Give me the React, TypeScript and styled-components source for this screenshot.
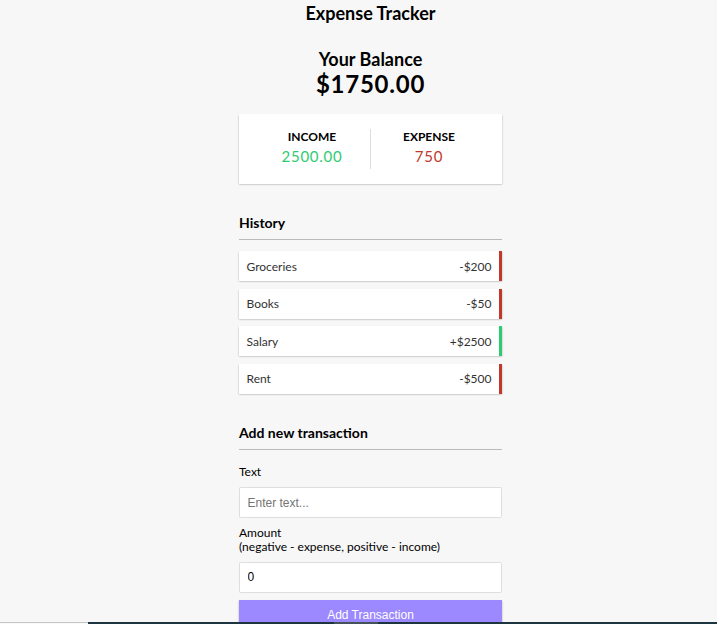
import React from "react";
import styled, { createGlobalStyle } from "styled-components";

const GlobalStyle = createGlobalStyle`
  * { box-sizing: border-box; }
  html, body { margin: 0; padding: 0; }
  body {
    background-color: #f7f7f7;
    font-family: Lato, "Noto Sans", sans-serif;
    color: #000;
  }
`;

const Page = styled.div`
  display: flex;
  flex-direction: column;
  align-items: center;
  padding-left: 24px;
  padding-top: 3px;
`;

const Title = styled.h2`
  font-size: 18px;
  font-weight: 700;
  margin: 0;
  line-height: 1.2;
`;

const Container = styled.div`
  width: 263px;
  margin: 24px auto 22px;
`;

const BalanceLabel = styled.h4`
  margin: 0;
  font-size: 18px;
  font-weight: 700;
  line-height: 1.2;
  text-align: center;
`;

const Balance = styled.h1`
  margin: 0;
  font-size: 24px;
  font-weight: 700;
  letter-spacing: 0.75px;
  line-height: 1.2;
  text-align: center;
`;

const IncExp = styled.div`
  background: #fff;
  box-shadow: 0 0.75px 2.25px rgba(0, 0, 0, 0.12), 0 0.75px 1.5px rgba(0, 0, 0, 0.24);
  padding: 15px;
  display: flex;
  justify-content: space-between;
  margin: 15px 0;
`;

const IncExpCol = styled.div<{ $divider?: boolean }>`
  flex: 1;
  text-align: center;
  border-right: ${(p) => (p.$divider ? "1px solid #dedede" : "none")};
`;

const ColTitle = styled.h4`
  margin: 0;
  font-size: 12px;
  font-weight: 700;
  text-transform: uppercase;
  line-height: 1.2;
  padding-top: 1px;
`;

const Money = styled.p<{ $kind: "plus" | "minus" }>`
  font-size: 15px;
  letter-spacing: 0.75px;
  margin: 3px 0 3.75px;
  line-height: 1.2;
  color: ${(p) => (p.$kind === "plus" ? "#2ecc71" : "#c0392b")};
`;

const SectionTitle = styled.h3`
  font-size: 14px;
  font-weight: 700;
  line-height: 1.2;
  border-bottom: 1px solid #bbb;
  padding-bottom: 7.5px;
  margin: 31px 0 7.5px;
`;

const List = styled.ul`
  list-style-type: none;
  padding: 0;
  margin: 11px 0 30px;
`;

const Item = styled.li<{ $kind: "plus" | "minus" }>`
  background-color: #fff;
  box-shadow: 0 0.75px 2.25px rgba(0, 0, 0, 0.12), 0 0.75px 1.5px rgba(0, 0, 0, 0.24);
  color: #333;
  display: flex;
  justify-content: space-between;
  font-size: 12px;
  line-height: 1.25;
  padding: 7.5px;
  margin: 7.5px 0;
  border-right: 3.75px solid ${(p) => (p.$kind === "plus" ? "#2ecc71" : "#c0392b")};
`;

const FormControl = styled.div`
  font-size: 12px;
  line-height: 1.2;
`;

const Label = styled.label`
  display: inline-block;
  margin: 7.5px 0;
  font-size: 12px;
`;

const Input = styled.input`
  border: 0.75px solid #dedede;
  border-radius: 1.5px;
  display: block;
  font-family: "Liberation Sans", Arial, sans-serif;
  font-size: 12px;
  padding: 7.5px;
  width: 100%;
  background: #fff;
  color: #000;
  outline: none;
  &::placeholder { color: #757575; }
`;

const Button = styled.button`
  cursor: pointer;
  background-color: #9c88ff;
  box-shadow: 0 0.75px 2.25px rgba(0, 0, 0, 0.12), 0 0.75px 1.5px rgba(0, 0, 0, 0.24);
  color: #fff;
  border: 0;
  display: block;
  font-family: "Liberation Sans", Arial, sans-serif;
  font-size: 12px;
  margin: 7.5px 0 22.5px;
  padding: 7.5px;
  width: 100%;
`;

const BottomBar = styled.div`
  position: fixed;
  left: 0;
  right: 0;
  bottom: 0;
  height: 2px;
  display: flex;
`;

const BarSeg = styled.div<{ $w?: number; $color: string; $thin?: boolean }>`
  flex: ${(p) => (p.$w ? `0 0 ${p.$w}px` : "1")};
  background: ${(p) => p.$color};
  height: ${(p) => (p.$thin ? "1px" : "2px")};
`;

const transactions = [
  { text: "Groceries", amount: "-$200", kind: "minus" as const },
  { text: "Books", amount: "-$50", kind: "minus" as const },
  { text: "Salary", amount: "+$2500", kind: "plus" as const },
  { text: "Rent", amount: "-$500", kind: "minus" as const },
];

export default function App() {
  return (
    <>
      <GlobalStyle />
      <Page>
        <Title>Expense Tracker</Title>
        <Container>
          <BalanceLabel>Your Balance</BalanceLabel>
          <Balance>$1750.00</Balance>
          <IncExp>
            <IncExpCol $divider>
              <ColTitle>Income</ColTitle>
              <Money $kind="plus">2500.00</Money>
            </IncExpCol>
            <IncExpCol>
              <ColTitle>Expense</ColTitle>
              <Money $kind="minus">750</Money>
            </IncExpCol>
          </IncExp>
          <SectionTitle>History</SectionTitle>
          <List>
            {transactions.map((t) => (
              <Item key={t.text} $kind={t.kind}>
                <span>{t.text}</span>
                <span>{t.amount}</span>
              </Item>
            ))}
          </List>
          <SectionTitle>Add new transaction</SectionTitle>
          <form onSubmit={(e) => e.preventDefault()}>
            <FormControl>
              <Label htmlFor="text">Text</Label>
              <Input type="text" id="text" placeholder="Enter text..." />
            </FormControl>
            <FormControl>
              <Label htmlFor="amount">
                Amount <br />
                (negative - expense, positive - income)
              </Label>
              <Input type="number" id="amount" defaultValue={0} />
            </FormControl>
            <Button>Add Transaction</Button>
          </form>
        </Container>
      </Page>
      <BottomBar>
        <BarSeg $w={88} $color="#c6c6c6" $thin />
        <BarSeg $w={246} $color="#1d3441" />
        <BarSeg $w={44} $color="#46525b" />
        <BarSeg $color="#1d3441" />
      </BottomBar>
    </>
  );
}
